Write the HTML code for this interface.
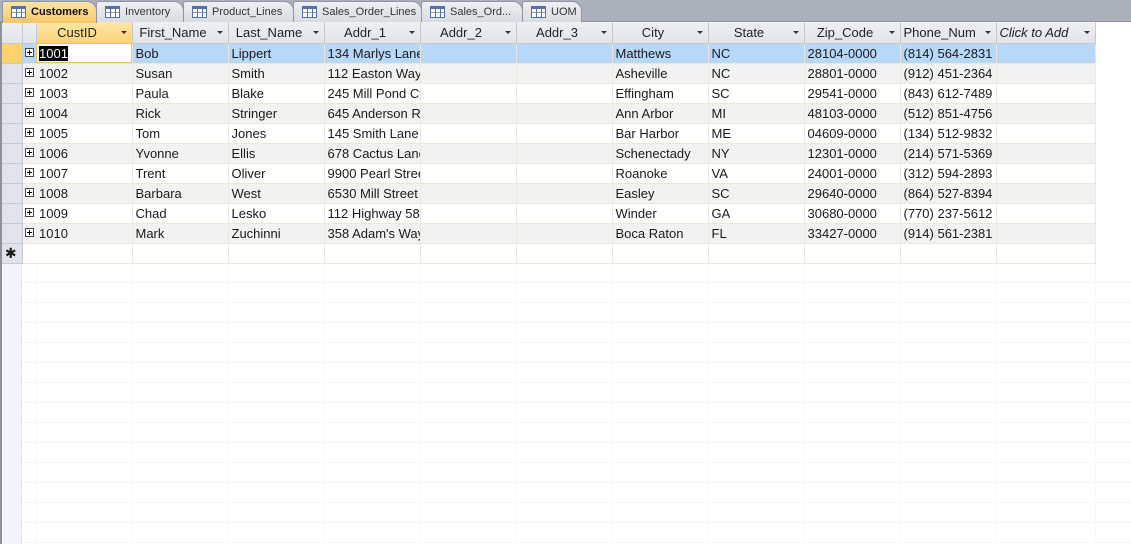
<!DOCTYPE html>
<html><head><meta charset="utf-8">
<style>
*{margin:0;padding:0;box-sizing:border-box}
body{width:1131px;height:544px;overflow:hidden;background:#fff;font-family:"Liberation Sans",Arial,sans-serif;font-size:13px;color:#1a1a1a;position:relative}
#tabs{position:absolute;left:0;top:0;width:1131px;height:22px;background:#abb1bc;border-bottom:1px solid #8f96a1}
.tab{position:absolute;top:1px;height:21px;background:linear-gradient(#eef0f3,#d9dce1);border:1px solid #8f96a1;border-bottom:none;border-radius:3px 10px 0 0;font-size:11px;color:#333;padding-left:28px;line-height:20px}
.tab.act{background:linear-gradient(#fde4a6,#f8c667);font-weight:bold;color:#111;z-index:2;height:22px}
.ico{position:absolute;left:8px;top:4px;width:15px;height:12px;border:1px solid #5370a8;background:
linear-gradient(90deg,transparent 4px,#5370a8 4px,#5370a8 5px,transparent 5px,transparent 9px,#5370a8 9px,#5370a8 10px,transparent 10px),
linear-gradient(#5370a8 0,#5370a8 2px,#fff 2px,#fff 5px,#8aa0c8 5px,#8aa0c8 6px,#fff 6px);}
#ghost{position:absolute;left:0;top:263px;width:1131px;height:281px;
background:
linear-gradient(90deg,#f3f4fb 0,#f3f4fb 21px,#e4e6ec 21px,#e4e6ec 22px,transparent 22px),
repeating-linear-gradient(180deg,transparent 0,transparent 19px,#f7f6f2 19px,#f7f6f2 20px);}
#ghost .v{position:absolute;top:0;bottom:0;width:1px;background:#f9f8f2}
#lb{position:absolute;left:0;top:22px;width:2px;height:522px;background:#8c929c;z-index:5}
table{position:absolute;left:0;top:22px;width:1095px;border-collapse:collapse;table-layout:fixed}
td,th{height:20px;border-right:1px solid #ece7d6;border-bottom:1px solid #ece7d6;white-space:nowrap;overflow:hidden;text-overflow:clip;padding:0 0 0 3px;text-align:left;font-weight:normal}
th{height:21px;background:linear-gradient(#eef0f3,#e0e3e8);border-right:1px solid #c5c9cf;border-bottom:1px solid #c5c9cf;text-align:center;position:relative;color:#222;padding:0 14px 0 0}
th.l{text-align:left;padding-left:3px}
th i{position:absolute;right:5px;top:9px;border-left:3px solid transparent;border-right:3px solid transparent;border-top:3px solid #333}
th.cid{background:linear-gradient(#fde7a8,#fbd374)}
td.s{background:#e0e3e8;border-right:1px solid #c5c9cf;border-bottom:1px solid #c5c9cf;padding:0}
td.e{padding:0;border-right:none;text-align:center}
td.e b{display:inline-block;width:9px;height:9px;border:1px solid #444;position:relative;vertical-align:middle;margin-top:-3px;background:#fff}
td.e b:before{content:"";position:absolute;left:1px;top:3px;width:5px;height:1px;background:#000}
td.e b:after{content:"";position:absolute;left:3px;top:1px;width:1px;height:5px;background:#000}
tr.g td{background:#f2f2f2}
tr.g td.s{background:#e0e3e8}
tr.sel td{background:#b7d8f9}
tr.sel td.s{background:#fcd36b}
tr.sel td.c1{background:#fff;outline:1px solid #f0c050;outline-offset:-1px}
.hl{background:#000;color:#fff}
</style></head><body>
<div id="tabs">
<div class="tab act" style="left:2px;width:95px"><span class="ico"></span>Customers</div>
<div class="tab" style="left:96px;width:88px"><span class="ico"></span>Inventory</div>
<div class="tab" style="left:183px;width:111px"><span class="ico"></span>Product_Lines</div>
<div class="tab" style="left:293px;width:129px"><span class="ico"></span>Sales_Order_Lines</div>
<div class="tab" style="left:421px;width:102px"><span class="ico"></span>Sales_Ord...</div>
<div class="tab" style="left:522px;width:60px"><span class="ico"></span>UOM</div>
</div>
<div id="ghost">
<div class="v" style="left:36px;background:#f4f4f4"></div><div class="v" style="left:132px"></div><div class="v" style="left:228px"></div><div class="v" style="left:324px"></div><div class="v" style="left:420px"></div><div class="v" style="left:516px"></div><div class="v" style="left:612px"></div><div class="v" style="left:708px"></div><div class="v" style="left:804px"></div><div class="v" style="left:900px"></div><div class="v" style="left:996px"></div><div class="v" style="left:1095px"></div>
</div>
<div id="lb"></div>
<table>
<colgroup><col style="width:22px"><col style="width:14px"><col style="width:96px"><col style="width:96px"><col style="width:96px"><col style="width:96px"><col style="width:96px"><col style="width:96px"><col style="width:96px"><col style="width:96px"><col style="width:96px"><col style="width:96px"><col style="width:99px"></colgroup>
<tr><th style="padding:0"></th><th style="padding:0;border-left:none"></th><th class="cid">CustID<i></i></th><th>First_Name<i></i></th><th>Last_Name<i></i></th><th>Addr_1<i></i></th><th>Addr_2<i></i></th><th>Addr_3<i></i></th><th>City<i></i></th><th>State<i></i></th><th>Zip_Code<i></i></th><th class="l">Phone_Num<i></i></th><th class="l"><em>Click to Add</em><i></i></th></tr>
<tr class="sel"><td class="s"></td><td class="e"><b></b></td><td class="c1"><span class="hl">1001</span></td><td>Bob</td><td>Lippert</td><td>134 Marlys Lane</td><td></td><td></td><td>Matthews</td><td>NC</td><td>28104-0000</td><td>(814) 564-2831</td><td></td></tr>
<tr class="g"><td class="s"></td><td class="e"><b></b></td><td>1002</td><td>Susan</td><td>Smith</td><td>112 Easton Way</td><td></td><td></td><td>Asheville</td><td>NC</td><td>28801-0000</td><td>(912) 451-2364</td><td></td></tr>
<tr><td class="s"></td><td class="e"><b></b></td><td>1003</td><td>Paula</td><td>Blake</td><td>245 Mill Pond Ct</td><td></td><td></td><td>Effingham</td><td>SC</td><td>29541-0000</td><td>(843) 612-7489</td><td></td></tr>
<tr class="g"><td class="s"></td><td class="e"><b></b></td><td>1004</td><td>Rick</td><td>Stringer</td><td>645 Anderson Rd</td><td></td><td></td><td>Ann Arbor</td><td>MI</td><td>48103-0000</td><td>(512) 851-4756</td><td></td></tr>
<tr><td class="s"></td><td class="e"><b></b></td><td>1005</td><td>Tom</td><td>Jones</td><td>145 Smith Lane</td><td></td><td></td><td>Bar Harbor</td><td>ME</td><td>04609-0000</td><td>(134) 512-9832</td><td></td></tr>
<tr class="g"><td class="s"></td><td class="e"><b></b></td><td>1006</td><td>Yvonne</td><td>Ellis</td><td>678 Cactus Lane</td><td></td><td></td><td>Schenectady</td><td>NY</td><td>12301-0000</td><td>(214) 571-5369</td><td></td></tr>
<tr><td class="s"></td><td class="e"><b></b></td><td>1007</td><td>Trent</td><td>Oliver</td><td>9900 Pearl Street</td><td></td><td></td><td>Roanoke</td><td>VA</td><td>24001-0000</td><td>(312) 594-2893</td><td></td></tr>
<tr class="g"><td class="s"></td><td class="e"><b></b></td><td>1008</td><td>Barbara</td><td>West</td><td>6530 Mill Street</td><td></td><td></td><td>Easley</td><td>SC</td><td>29640-0000</td><td>(864) 527-8394</td><td></td></tr>
<tr><td class="s"></td><td class="e"><b></b></td><td>1009</td><td>Chad</td><td>Lesko</td><td>112 Highway 58</td><td></td><td></td><td>Winder</td><td>GA</td><td>30680-0000</td><td>(770) 237-5612</td><td></td></tr>
<tr class="g"><td class="s"></td><td class="e"><b></b></td><td>1010</td><td>Mark</td><td>Zuchinni</td><td>358 Adam's Way</td><td></td><td></td><td>Boca Raton</td><td>FL</td><td>33427-0000</td><td>(914) 561-2381</td><td></td></tr>
<tr><td class="s" style="text-align:center;font-size:14px;line-height:14px">✱</td><td class="e"></td><td></td><td></td><td></td><td></td><td></td><td></td><td></td><td></td><td></td><td></td><td></td></tr>
</table>
</body></html>
